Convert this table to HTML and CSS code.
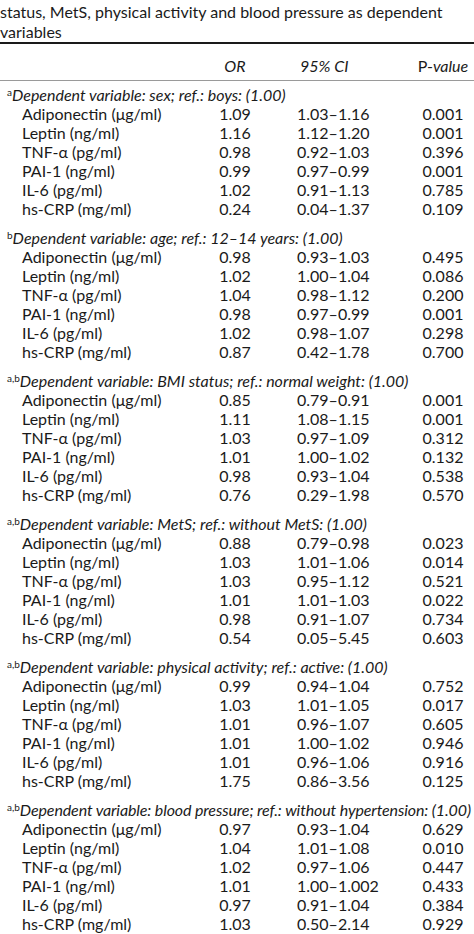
FILE: index.html
```html
<!DOCTYPE html>
<html>
<head>
<meta charset="utf-8">
<link rel="stylesheet" href="styles.css">
</head>
<body>
<div class="caption">
  <div class="cap-line">status, MetS, physical activity and blood pressure as dependent</div>
  <div class="cap-line">variables</div>
</div>
<table class="tbl">
  <colgroup>
    <col class="c-label"><col class="c-or"><col class="c-ci"><col class="c-p">
  </colgroup>
  <thead>
    <tr class="head">
      <th></th>
      <th class="or"><i>OR</i></th>
      <th class="ci"><i>95% CI</i></th>
      <th class="p">P-<i>value</i></th>
    </tr>
  </thead>
  <tbody>
    <tr class="sec first"><td colspan="4"><sup>a</sup><i>Dependent variable: sex; ref.: boys: (1.00)</i></td></tr>
    <tr><td class="lbl">Adiponectin (μg/ml)</td><td class="or">1.09</td><td class="ci">1.03–1.16</td><td class="p">0.001</td></tr>
    <tr><td class="lbl">Leptin (ng/ml)</td><td class="or">1.16</td><td class="ci">1.12–1.20</td><td class="p">0.001</td></tr>
    <tr><td class="lbl">TNF-α (pg/ml)</td><td class="or">0.98</td><td class="ci">0.92–1.03</td><td class="p">0.396</td></tr>
    <tr><td class="lbl">PAI-1 (ng/ml)</td><td class="or">0.99</td><td class="ci">0.97–0.99</td><td class="p">0.001</td></tr>
    <tr><td class="lbl">IL-6 (pg/ml)</td><td class="or">1.02</td><td class="ci">0.91–1.13</td><td class="p">0.785</td></tr>
    <tr><td class="lbl">hs-CRP (mg/ml)</td><td class="or">0.24</td><td class="ci">0.04–1.37</td><td class="p">0.109</td></tr>

    <tr class="sec"><td colspan="4"><sup>b</sup><i>Dependent variable: age; ref.: 12–14 years: (1.00)</i></td></tr>
    <tr><td class="lbl">Adiponectin (μg/ml)</td><td class="or">0.98</td><td class="ci">0.93–1.03</td><td class="p">0.495</td></tr>
    <tr><td class="lbl">Leptin (ng/ml)</td><td class="or">1.02</td><td class="ci">1.00–1.04</td><td class="p">0.086</td></tr>
    <tr><td class="lbl">TNF-α (pg/ml)</td><td class="or">1.04</td><td class="ci">0.98–1.12</td><td class="p">0.200</td></tr>
    <tr><td class="lbl">PAI-1 (ng/ml)</td><td class="or">0.98</td><td class="ci">0.97–0.99</td><td class="p">0.001</td></tr>
    <tr><td class="lbl">IL-6 (pg/ml)</td><td class="or">1.02</td><td class="ci">0.98–1.07</td><td class="p">0.298</td></tr>
    <tr><td class="lbl">hs-CRP (mg/ml)</td><td class="or">0.87</td><td class="ci">0.42–1.78</td><td class="p">0.700</td></tr>

    <tr class="sec"><td colspan="4"><sup>a,b</sup><i>Dependent variable: BMI status; ref.: normal weight: (1.00)</i></td></tr>
    <tr><td class="lbl">Adiponectin (μg/ml)</td><td class="or">0.85</td><td class="ci">0.79–0.91</td><td class="p">0.001</td></tr>
    <tr><td class="lbl">Leptin (ng/ml)</td><td class="or">1.11</td><td class="ci">1.08–1.15</td><td class="p">0.001</td></tr>
    <tr><td class="lbl">TNF-α (pg/ml)</td><td class="or">1.03</td><td class="ci">0.97–1.09</td><td class="p">0.312</td></tr>
    <tr><td class="lbl">PAI-1 (ng/ml)</td><td class="or">1.01</td><td class="ci">1.00–1.02</td><td class="p">0.132</td></tr>
    <tr><td class="lbl">IL-6 (pg/ml)</td><td class="or">0.98</td><td class="ci">0.93–1.04</td><td class="p">0.538</td></tr>
    <tr><td class="lbl">hs-CRP (mg/ml)</td><td class="or">0.76</td><td class="ci">0.29–1.98</td><td class="p">0.570</td></tr>

    <tr class="sec"><td colspan="4"><sup>a,b</sup><i>Dependent variable: MetS; ref.: without MetS: (1.00)</i></td></tr>
    <tr><td class="lbl">Adiponectin (μg/ml)</td><td class="or">0.88</td><td class="ci">0.79–0.98</td><td class="p">0.023</td></tr>
    <tr><td class="lbl">Leptin (ng/ml)</td><td class="or">1.03</td><td class="ci">1.01–1.06</td><td class="p">0.014</td></tr>
    <tr><td class="lbl">TNF-α (pg/ml)</td><td class="or">1.03</td><td class="ci">0.95–1.12</td><td class="p">0.521</td></tr>
    <tr><td class="lbl">PAI-1 (ng/ml)</td><td class="or">1.01</td><td class="ci">1.01–1.03</td><td class="p">0.022</td></tr>
    <tr><td class="lbl">IL-6 (pg/ml)</td><td class="or">0.98</td><td class="ci">0.91–1.07</td><td class="p">0.734</td></tr>
    <tr><td class="lbl">hs-CRP (mg/ml)</td><td class="or">0.54</td><td class="ci">0.05–5.45</td><td class="p">0.603</td></tr>

    <tr class="sec"><td colspan="4"><sup>a,b</sup><i>Dependent variable: physical activity; ref.: active: (1.00)</i></td></tr>
    <tr><td class="lbl">Adiponectin (μg/ml)</td><td class="or">0.99</td><td class="ci">0.94–1.04</td><td class="p">0.752</td></tr>
    <tr><td class="lbl">Leptin (ng/ml)</td><td class="or">1.03</td><td class="ci">1.01–1.05</td><td class="p">0.017</td></tr>
    <tr><td class="lbl">TNF-α (pg/ml)</td><td class="or">1.01</td><td class="ci">0.96–1.07</td><td class="p">0.605</td></tr>
    <tr><td class="lbl">PAI-1 (ng/ml)</td><td class="or">1.01</td><td class="ci">1.00–1.02</td><td class="p">0.946</td></tr>
    <tr><td class="lbl">IL-6 (pg/ml)</td><td class="or">1.01</td><td class="ci">0.96–1.06</td><td class="p">0.916</td></tr>
    <tr><td class="lbl">hs-CRP (mg/ml)</td><td class="or">1.75</td><td class="ci">0.86–3.56</td><td class="p">0.125</td></tr>

    <tr class="sec"><td colspan="4"><sup>a,b</sup><i class="tight">Dependent variable: blood pressure; ref.: without hypertension: (1.00)</i></td></tr>
    <tr><td class="lbl">Adiponectin (μg/ml)</td><td class="or">0.97</td><td class="ci">0.93–1.04</td><td class="p">0.629</td></tr>
    <tr><td class="lbl">Leptin (ng/ml)</td><td class="or">1.04</td><td class="ci">1.01–1.08</td><td class="p">0.010</td></tr>
    <tr><td class="lbl">TNF-α (pg/ml)</td><td class="or">1.02</td><td class="ci">0.97–1.06</td><td class="p">0.447</td></tr>
    <tr><td class="lbl">PAI-1 (ng/ml)</td><td class="or">1.01</td><td class="ci">1.00–1.002</td><td class="p">0.433</td></tr>
    <tr><td class="lbl">IL-6 (pg/ml)</td><td class="or">0.97</td><td class="ci">0.91–1.04</td><td class="p">0.384</td></tr>
    <tr><td class="lbl">hs-CRP (mg/ml)</td><td class="or">1.03</td><td class="ci">0.50–2.14</td><td class="p">0.929</td></tr>
  </tbody>
</table>
</body>
</html>
```

FILE: styles.css
```css
html, body {
  margin: 0;
  padding: 0;
  background: #ffffff;
  overflow: hidden;
}
body {
  width: 474px;
  font-family: "Lato", "Open Sans", sans-serif;
  font-size: 16px;
  color: #1a1a1a;
}
.caption {
  padding-top: 2px;
  line-height: 20px;
  white-space: nowrap;
}
.cap-line {
  height: 20px;
}
.tbl {
  width: 474px;
  table-layout: fixed;
  border-collapse: collapse;
  border-top: 2px solid #1a1a1a;
  white-space: nowrap;
}
.c-label { width: 205px; }
.c-or { width: 60px; }
.c-ci { width: 147px; }
.c-p { width: 62px; }
.tbl th, .tbl td {
  padding: 0;
  line-height: 19px;
  font-weight: normal;
  overflow: visible;
}
.head th {
  padding-top: 12px;
  padding-bottom: 5px;
  border-bottom: 1px solid #9a9a9a;
}
.or { text-align: center; }
.p { text-align: center; }
.ci { text-align: left; padding-left: 32px !important; }
.head .ci { padding-left: 35px !important; }
.lbl { padding-left: 22px !important; }
.sec td {
  padding-top: 10px;
  padding-left: 7px;
}
.sec.first td {
  padding-top: 4px;
}
.sec sup {
  font-size: 10px;
  line-height: 0;
  vertical-align: 5px;
}
.tight {
  letter-spacing: -0.12px;
}
```
